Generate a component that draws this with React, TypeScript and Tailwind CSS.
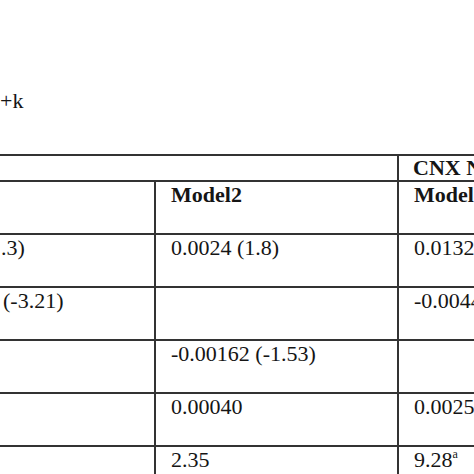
import React from "react";

interface DataRow {
  first: string;
  firstPad: string;
  second: string;
  third: React.ReactNode;
}

const rows: DataRow[] = [
  { first: ".3)", firstPad: "pl-[1px]", second: "0.0024 (1.8)", third: "0.0132 (2.41)" },
  { first: "(-3.21)", firstPad: "pl-[3px]", second: "", third: "-0.0044 (-2.87)" },
  { first: "", firstPad: "pl-[3px]", second: "-0.00162 (-1.53)", third: "" },
  { first: "", firstPad: "pl-[3px]", second: "0.00040", third: "0.00251" },
  {
    first: "",
    firstPad: "pl-[3px]",
    second: "2.35",
    third: (
      <>
        9.28<sup className="text-[12px] relative -top-[9px]">a</sup>
      </>
    ),
  },
];

export default function App() {
  return (
    <div
      className="w-[474px] h-[474px] overflow-hidden bg-white text-[#151515]"
      style={{ fontFamily: '"Liberation Serif", "Times New Roman", serif' }}
    >
      {/* equation line above the table */}
      <div className="pt-[89px] h-[154px] text-[22px] leading-[24px] whitespace-nowrap">+k</div>

      {/* table */}
      <div className="w-[640px] border-t-2 border-[#333] text-[22px] leading-[26px]">
        {/* header row 1 */}
        <div className="flex h-[26px] border-b-2 border-[#333]">
          <div className="w-[397px] shrink-0"></div>
          <div className="flex-1 border-l-2 border-[#333] pl-[14px] font-bold whitespace-nowrap leading-[24px]">
            CNX Nifty
          </div>
        </div>

        {/* header row 2 */}
        <div className="flex h-[53px] border-b-2 border-[#333] font-bold">
          <div className="w-[154px] shrink-0"></div>
          <div className="w-[243px] shrink-0 border-l-2 border-[#333] pl-[15px]">Model2</div>
          <div className="flex-1 border-l-2 border-[#333] pl-[15px] whitespace-nowrap">Model1</div>
        </div>

        {/* data rows */}
        {rows.map((row, i) => (
          <div
            key={i}
            className={`flex h-[53px] ${i < rows.length - 1 ? "border-b-2 border-[#333]" : ""}`}
          >
            <div className={`w-[154px] shrink-0 whitespace-nowrap ${row.firstPad}`}>{row.first}</div>
            <div className="w-[243px] shrink-0 border-l-2 border-[#333] pl-[15px] whitespace-nowrap">
              {row.second}
            </div>
            <div className="flex-1 border-l-2 border-[#333] pl-[15px] whitespace-nowrap">{row.third}</div>
          </div>
        ))}
      </div>
    </div>
  );
}
